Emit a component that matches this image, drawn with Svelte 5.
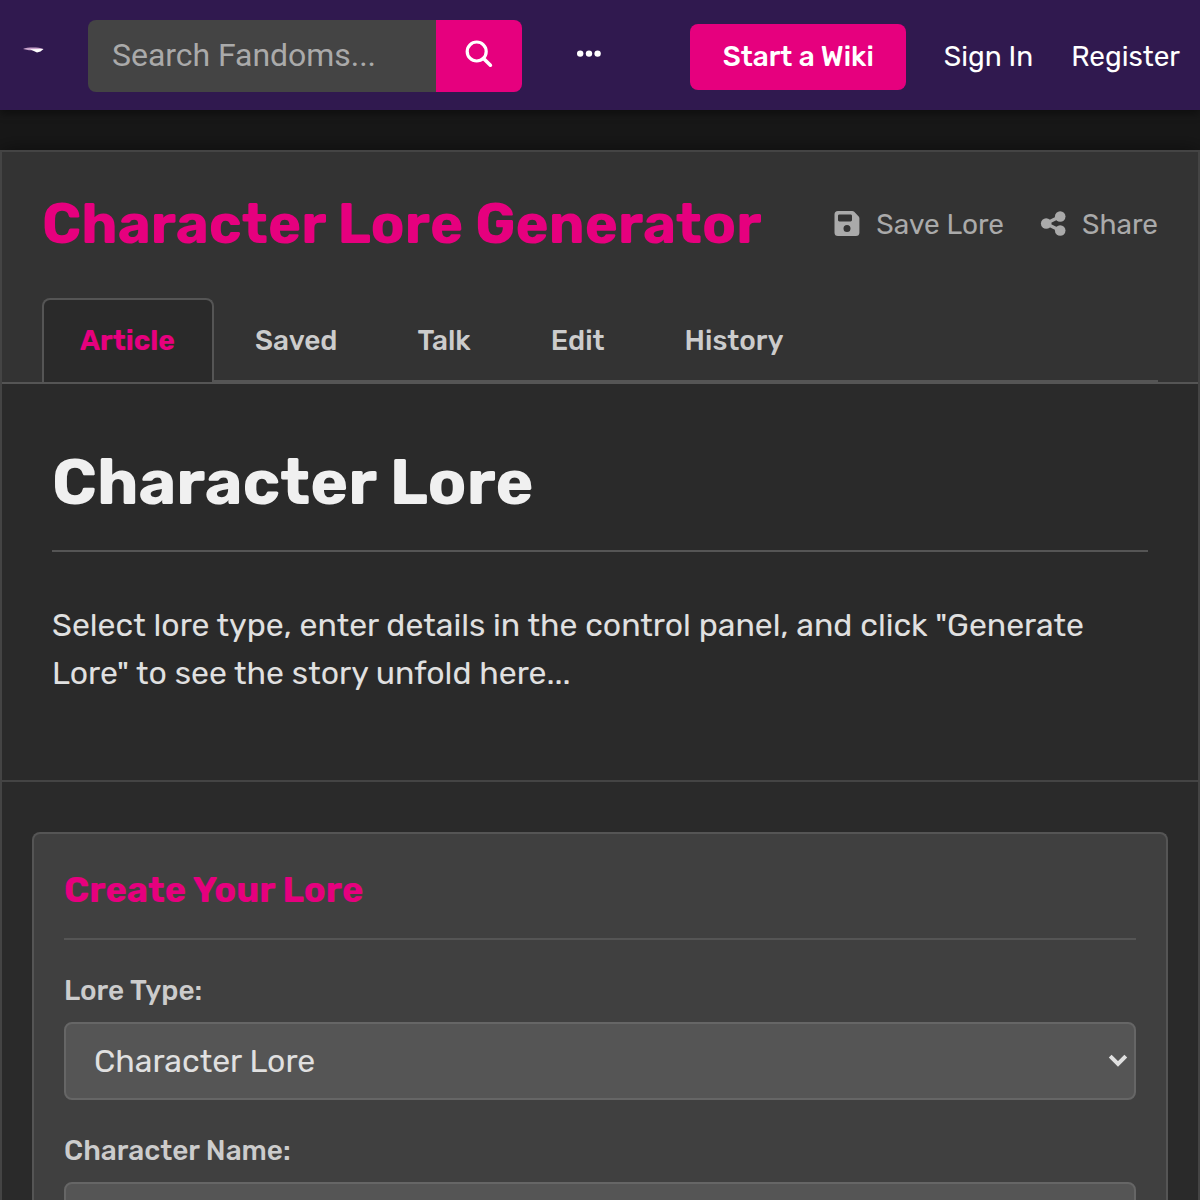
<script lang="ts">
	const tabs = ['Article', 'Saved', 'Talk', 'Edit', 'History'];
	const loreTypes = ['Character Lore', 'World Lore', 'Item Lore'];

	let activeTab = $state('Article');
	let loreType = $state('Character Lore');
	let characterName = $state('');
	let query = $state('');
</script>

<header class="topbar">
	<a class="logo" href="#home" aria-label="Home">
		<svg width="24" height="8" viewBox="0 0 24 8">
			<path d="M1 4C5 2.2 16 2 21.5 4L17 5.2H7Z" fill="#c9a3cc" />
			<path d="M8 4.2 21.5 4 18.5 6.4 15 7.4Z" fill="#fff" />
		</svg>
	</a>
	<form class="search" onsubmit={(event) => event.preventDefault()}>
		<input type="text" placeholder="Search Fandoms..." bind:value={query} />
		<button type="submit" aria-label="Search">
			<svg width="28" height="28" viewBox="0 0 28 28" fill="none" stroke="#fff" stroke-linecap="round">
				<circle cx="11.7" cy="11.5" r="9.5" stroke-width="3.2" />
				<path d="m18.8 18.8 6.6 6.4" stroke-width="3.6" />
			</svg>
		</button>
	</form>
	<button class="more" aria-label="More">
		<svg width="24" height="8" viewBox="0 0 24 8" fill="#fff">
			<circle cx="3.2" cy="3.6" r="3.2" />
			<circle cx="12" cy="3.6" r="3.2" />
			<circle cx="20.6" cy="3.6" r="3.2" />
		</svg>
	</button>
	<nav class="account">
		<a class="start" href="#start">Start a Wiki</a>
		<a class="signin" href="#signin">Sign In</a>
		<a class="register" href="#register">Register</a>
	</nav>
</header>

<main class="page">
	<section class="page-head">
		<div class="title-row">
			<h1>Character Lore Generator</h1>
			<div class="actions">
				<button class="save">
					<svg width="26" height="26" viewBox="0 0 26 26" fill="currentColor">
						<path
							fill-rule="evenodd"
							d="M4 0h14.2c.8 0 1.4.3 2 .8l4.3 4.4c.6.6.9 1.2.9 2V21.5a3.5 3.5 0 0 1-3.5 3.5H4A3.5 3.5 0 0 1 .5 21.5V3.5A3.5 3.5 0 0 1 4 0ZM5.4 3.6c-.8 0-1.4.6-1.4 1.4v4c0 .8.6 1.4 1.4 1.4h11.2c.8 0 1.4-.6 1.4-1.4V5c0-.8-.6-1.4-1.4-1.4ZM13 14a3.5 3.5 0 1 0 0 7 3.5 3.5 0 0 0 0-7Z"
						/>
					</svg>
					<span>Save Lore</span>
				</button>
				<button class="share">
					<svg width="26" height="26" viewBox="0 0 26 26" fill="currentColor">
						<path d="M6 12.5 20 5.5M6 12.5l14 7" stroke="currentColor" stroke-width="3.4" />
						<circle cx="6.2" cy="12.5" r="5.3" />
						<circle cx="20.2" cy="5.5" r="5.3" />
						<circle cx="20.2" cy="19.5" r="5.3" />
					</svg>
					<span>Share</span>
				</button>
			</div>
		</div>
		<nav class="tabs">
			{#each tabs as tab}
				<button class="tab" class:active={tab === activeTab} onclick={() => (activeTab = tab)}>
					{tab}
				</button>
			{/each}
		</nav>
	</section>

	<article class="lore">
		<h2>Character Lore</h2>
		<p>
			Select lore type, enter details in the control panel, and click "Generate Lore" to see the story unfold here...
		</p>
	</article>

	<section class="controls">
		<div class="panel">
			<h3>Create Your Lore</h3>
			<label for="lore-type">Lore Type:</label>
			<div class="select-wrap">
				<select id="lore-type" bind:value={loreType}>
					{#each loreTypes as type}
						<option>{type}</option>
					{/each}
				</select>
				<svg width="20" height="14" viewBox="0 0 20 14" fill="none" stroke="#e0e0e0" stroke-width="4">
					<path d="m2.2 2.2 7.8 7.8 7.8-7.8" />
				</svg>
			</div>
			<label for="character-name">Character Name:</label>
			<input id="character-name" type="text" bind:value={characterName} />
		</div>
	</section>
</main>

<style>
	:global(body) {
		height: 1200px;
		overflow: hidden;
		background: #181818;
		font-family: Rubik, Roboto, sans-serif;
		color: #e0e0e0;
	}

	:global(#app) {
		display: flex;
		flex-direction: column;
		height: 1200px;
		overflow: hidden;
	}

	button,
	input,
	select {
		box-sizing: border-box;
		margin: 0;
		border: 0;
		font: inherit;
	}

	button {
		padding: 0;
		background: none;
		cursor: pointer;
	}

	svg {
		display: block;
		flex: none;
	}

	a {
		color: #fff;
		text-decoration: none;
	}

	.topbar {
		position: relative;
		display: flex;
		flex: none;
		align-items: center;
		box-sizing: border-box;
		height: 110px;
		padding: 0 20px 0 22px;
		background: #30194f;
		box-shadow: 0 4px 8px rgba(0, 0, 0, 0.4);
		font-size: 28px;
	}

	.logo {
		width: 66px;
		padding-bottom: 12px;
	}

	.search {
		display: flex;
		width: 434px;
		height: 72px;
		margin-top: 2px;
		border-radius: 8px;
		overflow: hidden;
	}

	.search input {
		width: 348px;
		padding: 0 24px 2px;
		background: #444;
		color: #e0e0e0;
		font: 32px Roboto, sans-serif;
		letter-spacing: -0.04px;
		outline: 0;
	}

	.search input::placeholder {
		color: #aaa;
	}

	.search button {
		flex: 1;
		display: grid;
		place-items: center;
		padding-bottom: 4px;
		background: #e6007e;
	}

	.more {
		margin: 0 0 3px 55px;
	}

	.account {
		display: flex;
		align-items: center;
		margin-left: auto;
		padding-top: 4px;
	}

	.start {
		box-sizing: border-box;
		width: 216px;
		height: 66px;
		margin-right: 38px;
		padding-left: 1px;
		border-radius: 8px;
		background: #e6007e;
		font-weight: 500;
		line-height: 66px;
		text-align: center;
	}

	.signin,
	.register {
		padding-bottom: 2px;
	}

	.signin {
		margin-right: 38px;
	}

	.page {
		flex: 1;
		min-height: 0;
		margin-top: 40px;
		border: 2px solid #444;
		border-bottom: 0;
		background: #2a2a2a;
		box-shadow: 0 0 20px rgba(0, 0, 0, 0.5);
		overflow: hidden;
	}

	.page-head {
		height: 230px;
		padding: 0 40px;
		border-bottom: 2px solid #555;
		background: #333;
	}

	.title-row {
		display: flex;
		align-items: center;
		justify-content: space-between;
		height: 144px;
		margin-bottom: 2px;
	}

	h1,
	h2,
	h3,
	p {
		margin: 0;
	}

	h1 {
		padding-bottom: 1px;
		color: #e6007e;
		font-size: 56px;
		font-weight: 700;
		line-height: 66px;
	}

	.actions {
		display: flex;
		gap: 36px;
		color: #aaa;
		font-size: 28px;
	}

	.actions button {
		display: flex;
		align-items: center;
		gap: 16px;
		color: inherit;
	}

	.tabs {
		display: flex;
		gap: 4px;
		box-sizing: border-box;
		height: 84px;
		border-bottom: 2px solid #555;
	}

	.tab {
		height: 84px;
		padding: 0 36px 2px;
		border: 2px solid transparent;
		border-bottom: 0;
		border-radius: 8px 8px 0 0;
		color: #ccc;
		font-size: 28px;
		font-weight: 500;
	}

	.tab.active {
		margin-right: -1px;
		padding-right: 37px;
		border-color: #555;
		background: #2a2a2a;
		color: #e6007e;
		font-weight: 700;
	}

	.lore {
		height: 396px;
		box-sizing: border-box;
		padding: 60px 50px 0;
	}

	h2 {
		box-sizing: border-box;
		height: 108px;
		border-bottom: 2px solid #555;
		color: #f0f0f0;
		font-size: 64px;
		font-weight: 700;
		line-height: 76px;
	}

	.lore p {
		margin-top: 49px;
		font-size: 32px;
		line-height: 48px;
	}

	.controls {
		padding: 50px 30px 0;
		border-top: 2px solid #444;
	}

	.panel {
		box-sizing: border-box;
		padding: 30px 30px 0;
		border: 2px solid #555;
		border-bottom: 0;
		border-radius: 8px 8px 0 0;
		background: #404040;
	}

	h3 {
		box-sizing: border-box;
		height: 76px;
		margin-bottom: 32px;
		border-bottom: 2px solid #555;
		color: #e6007e;
		font-size: 36px;
		font-weight: 700;
		line-height: 52px;
	}

	label {
		display: block;
		height: 50px;
		color: #ccc;
		font-size: 28px;
		font-weight: 500;
		line-height: 38px;
	}

	.select-wrap {
		position: relative;
		margin-bottom: 32px;
	}

	.select-wrap svg {
		position: absolute;
		top: 32px;
		right: 8px;
		pointer-events: none;
	}

	.panel select,
	.panel input {
		display: block;
		width: 100%;
		height: 78px;
		padding: 0 28px;
		border: 2px solid #666;
		border-radius: 8px;
		background: #555;
		color: #e0e0e0;
		font-size: 32px;
		appearance: none;
	}
</style>
